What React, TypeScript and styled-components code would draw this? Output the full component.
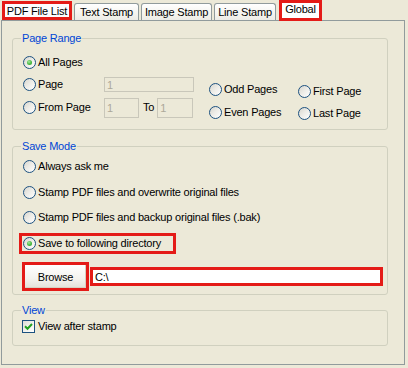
import React from "react";
import styled, { createGlobalStyle } from "styled-components";

const Global = createGlobalStyle`
  html, body { margin: 0; padding: 0; background: #ECE9D8; }
  body { font-family: "Liberation Sans", Arial, sans-serif; font-size: 11px; color: #000; }
  * { box-sizing: border-box; }
`;

const RED = "#E41B17";

const Window = styled.div`
  width: 408px;
  height: 368px;
  background: #ECE9D8;
  font-family: "Liberation Sans", Arial, sans-serif;
  font-size: 11px;
  letter-spacing: -0.2px;
  overflow: hidden;
`;

const TabStrip = styled.div`
  display: flex;
  align-items: flex-start;
  gap: 2px;
  height: 20px;
  padding-left: 2px;
  position: relative;
  z-index: 1;
`;

const Tab = styled.div<{ $w: number; $kind?: "hl" | "sel" }>`
  width: ${(p) => p.$w}px;
  display: flex;
  align-items: center;
  justify-content: center;
  white-space: nowrap;
  line-height: 13px;
  ${(p) =>
    p.$kind === "sel"
      ? `
    margin-top: 0;
    margin-left: 1px;
    height: 21px;
    margin-bottom: -1px;
    border: 3px solid ${RED};
    background: #FFFFFF;
    padding-bottom: 3px;
  `
      : p.$kind === "hl"
      ? `
    margin-top: 1px;
    height: 19px;
    border: 3px solid ${RED};
    background: #FCFCFE;
    padding-top: 1px;
  `
      : `
    margin-top: 3px;
    height: 17px;
    border: 1px solid #919B9C;
    border-bottom: none;
    border-radius: 3px 3px 0 0;
    background: linear-gradient(#FFFFFF, #F3F2EC 70%, #ECEBE6);
    padding-top: 1px;
  `}
`;

const Panel = styled.div`
  margin: 0 3px 0 1px;
  height: 345px;
  border: 1px solid #919B9C;
  background: #ECE9D8;
  padding: 17px 16px 0 10px;
  display: flex;
  flex-direction: column;
`;

const Group = styled.div<{ $h: number; $mt?: number }>`
  position: relative;
  height: ${(p) => p.$h}px;
  margin-top: ${(p) => p.$mt ?? 0}px;
  border: 1px solid #D0D0BF;
  border-radius: 3px;
`;

const GroupTitle = styled.span`
  position: absolute;
  top: -7px;
  left: 8px;
  padding: 0 1px;
  line-height: 13px;
  color: #0046D5;
  background: #ECE9D8;
  white-space: nowrap;
`;

const RangeBody = styled.div`
  display: flex;
  align-items: flex-start;
  padding: 15px 0 0 10px;
`;

const Column = styled.div<{ $pt?: number; $gap?: number; $ml?: number; $w?: number }>`
  display: flex;
  flex-direction: column;
  padding-top: ${(p) => p.$pt ?? 0}px;
  gap: ${(p) => p.$gap ?? 0}px;
  margin-left: ${(p) => p.$ml ?? 0}px;
  ${(p) => (p.$w ? `width: ${p.$w}px;` : "")}
`;

const Row = styled.div<{ $h?: number; $mt?: number }>`
  display: flex;
  align-items: center;
  height: ${(p) => p.$h ?? 16}px;
  margin-top: ${(p) => p.$mt ?? 0}px;
`;

const Option = styled.label<{ $w?: number }>`
  display: flex;
  align-items: center;
  gap: 2px;
  height: 16px;
  line-height: 13px;
  white-space: nowrap;
  ${(p) => (p.$w ? `width: ${p.$w}px;` : "")}
`;

const RadioDot = styled.span<{ $on?: boolean }>`
  flex: none;
  width: 13px;
  height: 13px;
  border-radius: 50%;
  border: 1px solid #1C5180;
  background: linear-gradient(135deg, #D6D5CE 0%, #ECEBE6 45%, #FFFFFF 100%);
  display: inline-flex;
  align-items: center;
  justify-content: center;
  &::after {
    content: "";
    display: ${(p) => (p.$on ? "block" : "none")};
    width: 5px;
    height: 5px;
    border-radius: 50%;
    background: radial-gradient(circle at 40% 35%, #A6EBA0 0%, #4DBB47 50%, #21A121 100%);
  }
`;

const Field = styled.input<{ $w: number; $h: number }>`
  width: ${(p) => p.$w}px;
  height: ${(p) => p.$h}px;
  margin: 0;
  padding: 0 2px;
  border: 1px solid #C9C7BA;
  background: #ECE9D8;
  color: #ACA899;
  -webkit-text-fill-color: #ACA899;
  font-family: "Liberation Sans", Arial, sans-serif;
  font-size: 11px;
  outline: none;
`;

const ToLabel = styled.span`
  margin: 0 3px 0 4px;
  line-height: 13px;
`;

const ModeBody = styled.div`
  display: flex;
  flex-direction: column;
  padding: 11px 0 0 10px;
`;

const Highlight = styled.div<{ $w: number }>`
  display: flex;
  align-items: center;
  width: ${(p) => p.$w}px;
  height: 21px;
  margin: 8px 0 0 -4px;
  padding-left: 1px;
  border: 3px solid ${RED};
`;

const DirRow = styled.div`
  display: flex;
  align-items: center;
  gap: 1px;
  margin: 8px 0 0 -1px;
`;

const BrowseButton = styled.button`
  width: 67px;
  height: 29px;
  margin: 0;
  padding: 0;
  border: 3px solid ${RED};
  background: linear-gradient(#FFFFFF, #F4F3EE 60%, #E3E1D8);
  box-shadow: inset -1px -1px 0 #D6D2C2;
  font-family: "Liberation Sans", Arial, sans-serif;
  font-size: 11px;
  letter-spacing: -0.2px;
  color: #000;
`;

const PathBox = styled.input`
  width: 293px;
  height: 19px;
  margin: 0;
  padding: 0 2px;
  border: 3px solid ${RED};
  background: #FFFFFF;
  color: #000;
  font-family: "Liberation Sans", Arial, sans-serif;
  font-size: 11px;
  letter-spacing: -0.2px;
  outline: none;
`;

const ViewBody = styled.div`
  padding: 9px 0 0 9px;
`;

const CheckLabel = styled.label`
  display: flex;
  align-items: center;
  gap: 3px;
  height: 13px;
  line-height: 13px;
  white-space: nowrap;
`;

const CheckBox = styled.span`
  flex: none;
  width: 13px;
  height: 13px;
  border: 1px solid #1C5180;
  background: linear-gradient(135deg, #DCDCD7 0%, #F2F2EE 55%, #FFFFFF 100%);
  display: inline-flex;
  align-items: center;
  justify-content: center;
`;

function Radio({ on, children, w }: { on?: boolean; children: React.ReactNode; w?: number }) {
  return (
    <Option $w={w}>
      <RadioDot $on={on} />
      <span>{children}</span>
    </Option>
  );
}

export default function App() {
  return (
    <>
      <Global />
      <Window>
        <TabStrip>
          <Tab $w={70} $kind="hl">PDF File List</Tab>
          <Tab $w={65}>Text Stamp</Tab>
          <Tab $w={71}>Image Stamp</Tab>
          <Tab $w={62}>Line Stamp</Tab>
          <Tab $w={43} $kind="sel">Global</Tab>
        </TabStrip>
        <Panel>
          <Group $h={92}>
            <GroupTitle>Page Range</GroupTitle>
            <RangeBody>
              <Column>
                <Row $h={16}>
                  <Radio on>All Pages</Radio>
                </Row>
                <Row $h={17} $mt={6}>
                  <Radio w={81}>Page</Radio>
                  <Field $w={90} $h={15} disabled defaultValue="1" />
                </Row>
                <Row $h={21} $mt={4}>
                  <Radio w={81}>From Page</Radio>
                  <Field $w={35} $h={20} disabled defaultValue="1" />
                  <ToLabel>To</ToLabel>
                  <Field $w={36} $h={20} disabled defaultValue="1" />
                </Row>
              </Column>
              <Column $pt={27} $gap={7} $ml={15} $w={89}>
                <Radio>Odd Pages</Radio>
                <Radio>Even Pages</Radio>
              </Column>
              <Column $pt={29} $gap={6}>
                <Radio>First Page</Radio>
                <Radio>Last Page</Radio>
              </Column>
            </RangeBody>
          </Group>

          <Group $h={149} $mt={16}>
            <GroupTitle>Save Mode</GroupTitle>
            <ModeBody>
              <Row>
                <Radio>Always ask me</Radio>
              </Row>
              <Row $mt={10}>
                <Radio>Stamp PDF files and overwrite original files</Radio>
              </Row>
              <Row $mt={9}>
                <Radio>Stamp PDF files and backup original files (.bak)</Radio>
              </Row>
              <Highlight $w={157}>
                <Radio on>Save to following directory</Radio>
              </Highlight>
              <DirRow>
                <BrowseButton type="button">Browse</BrowseButton>
                <PathBox readOnly defaultValue="C:\" />
              </DirRow>
            </ModeBody>
          </Group>

          <Group $h={36} $mt={15}>
            <GroupTitle>View</GroupTitle>
            <ViewBody>
              <CheckLabel>
                <CheckBox>
                  <svg width="9" height="9" viewBox="0 0 9 9">
                    <path d="M1 4.2 L3.5 6.7 L8 2" fill="none" stroke="#21A121" strokeWidth="2" />
                  </svg>
                </CheckBox>
                <span>View after stamp</span>
              </CheckLabel>
            </ViewBody>
          </Group>
        </Panel>
      </Window>
    </>
  );
}
